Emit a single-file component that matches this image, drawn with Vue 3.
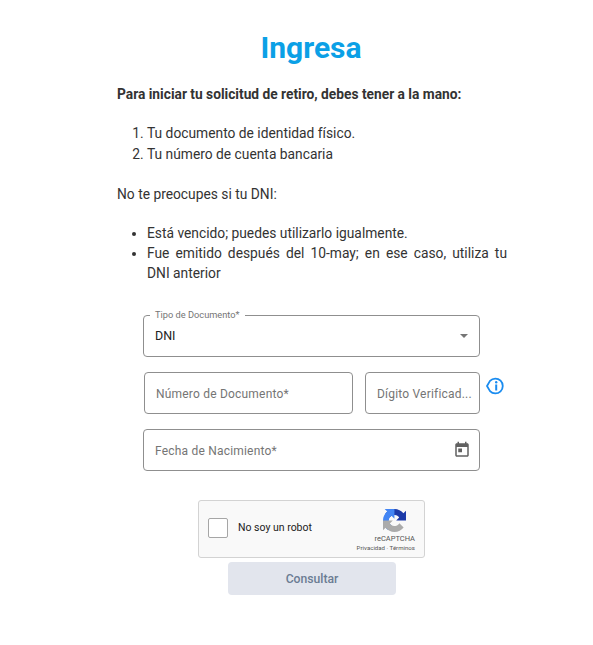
<script setup>
const needs = ['Tu documento de identidad físico.', 'Tu número de cuenta bancaria']
const notes = [
  'Está vencido; puedes utilizarlo igualmente.',
  'Fue emitido después del 10-may; en ese caso, utiliza tu DNI anterior',
]
</script>

<template>
  <main class="page">
    <h1 class="title">Ingresa</h1>
    <section class="intro">
      <p class="lead">Para iniciar tu solicitud de retiro, debes tener a la mano:</p>
      <ol class="list">
        <li v-for="item in needs" :key="item">{{ item }}</li>
      </ol>
      <p class="plain">No te preocupes si tu DNI:</p>
      <ul class="list bullets">
        <li v-for="item in notes" :key="item">{{ item }}</li>
      </ul>
    </section>

    <form class="form" @submit.prevent>
      <div class="field select">
        <span class="notch">Tipo de Documento*</span>
        <span class="value">DNI</span>
        <svg class="arrow" viewBox="0 0 10 5" width="8" height="4"><path d="M0 0h10L5 5z" fill="#757575" /></svg>
      </div>

      <div class="row">
        <div class="field number"><span class="hint">Número de Documento*</span></div>
        <div class="field digit"><span class="hint">Dígito Verificad...</span></div>
        <svg class="info" viewBox="0 0 20 20" width="20" height="20" fill="none">
          <path d="M4 4.900A7.400 7.400 0 1 1 4 15.100L1 10z" stroke="#1a8cf0" stroke-width="1.800" stroke-linejoin="round" />
          <circle cx="10.200" cy="6.300" r="1.200" fill="#1a8cf0" />
          <rect x="9.200" y="8.500" width="2" height="6" fill="#1a8cf0" />
        </svg>
      </div>

      <div class="field date">
        <span class="hint">Fecha de Nacimiento*</span>
        <svg class="calendar" viewBox="0 0 24 24" width="24" height="24">
          <path fill="#616161" d="M19 3h-1V1h-2v2H8V1H6v2H5c-1.110 0-1.990.9-1.990 2L3 19c0 1.100.89 2 2 2h14c1.100 0 2-.9 2-2V5c0-1.100-.9-2-2-2zm0 16H5V8h14v11zM7 10h5v5H7z" />
        </svg>
      </div>
    </form>

    <div class="captcha">
      <span class="box"></span>
      <span class="robot">No soy un robot</span>
      <div class="brand">
        <svg viewBox="0 0 64 64" width="23" height="23">
          <path fill="#1c3aa9" d="M64 31.955l-.033-1.370V4.687l-7.160 7.160C50.948 4.674 42.033.093 32.050.093c-10.400 0-19.622 4.960-25.458 12.640l11.736 11.860a15.550 15.550 0 0 1 4.754-5.334c2.050-1.600 4.952-2.906 8.968-2.906.485 0 .86.057 1.135.163 4.976.393 9.288 3.140 11.828 7.124l-8.307 8.307L64 31.953" />
          <path fill="#4285f4" d="M31.862 0l-1.370.033H4.594l7.160 7.160C4.580 13.050 0 21.967 0 31.950c0 10.400 4.960 19.622 12.640 25.458l11.860-11.736a15.550 15.550 0 0 1-5.334-4.754c-1.600-2.050-2.906-4.952-2.906-8.968 0-.485.057-.86.163-1.135.393-4.976 3.140-9.288 7.124-11.828l8.307 8.307L31.860 0" />
          <path fill="#ababab" d="M.001 32l.033 1.370v25.900l7.160-7.160c5.860 7.173 14.775 11.754 24.760 11.754 10.400 0 19.622-4.960 25.458-12.640L45.676 39.370a15.550 15.550 0 0 1-4.754 5.334c-2.050 1.600-4.952 2.906-8.968 2.906-.485 0-.86-.057-1.135-.163-4.976-.393-9.288-3.140-11.828-7.124l8.307-8.307L.001 32" />
        </svg>
        <span class="name">reCAPTCHA</span>
        <span class="terms">Privacidad · Términos</span>
      </div>
    </div>
    <button class="submit" type="button" disabled>Consultar</button>
  </main>
</template>

<style scoped>
.page {
  width: 390px;
  margin-left: 117px;
  font-family: Roboto, sans-serif;
  color: #333;
  font-size: 13.800px;
  line-height: 20px;
  display: flex;
  flex-direction: column;
  align-items: center;
  padding-top: 29px;
}
.title {
  margin: 0 2px 0 0;
  font-size: 30px;
  line-height: 38px;
  font-weight: 700;
  color: #0ba0e6;
}
.intro {
  width: 100%;
  margin-top: 17px;
}
.lead {
  margin: 0;
  font-weight: 700;
  font-size: 13.750px;
}
.plain {
  margin: 20px 0 18.500px;
}
.list {
  margin: 19px 0 0;
  padding-left: 30px;
  text-align: justify;
}
.list li + li {
  margin-top: 1px;
}
.bullets {
  margin-top: 0;
}
.bullets li + li {
  margin-top: 0;
}
.form {
  width: 337px;
  margin-top: 32.500px;
  margin-left: -1px;
  display: flex;
  flex-direction: column;
  gap: 15px;
  color: #757575;
  font-size: 12px;
}
.field {
  position: relative;
  height: 42px;
  box-sizing: border-box;
  border: 1px solid #8f8f8f;
  border-radius: 4px;
  display: flex;
  align-items: center;
  padding: 0 11px;
}
.notch {
  position: absolute;
  left: 6px;
  top: -7px;
  padding: 0 5px;
  background: #fff;
  font-size: 9.250px;
  line-height: 12px;
  color: #757575;
}
.value {
  color: #222;
  font-size: 12.500px;
}
.arrow {
  margin-left: auto;
}
.row {
  position: relative;
  display: flex;
  gap: 12px;
  padding-left: 1px;
}
.number {
  width: 209px;
}
.digit {
  width: 115px;
}
.hint {
  letter-spacing: 0.2px;
  white-space: nowrap;
  padding-top: 2px;
}
.info {
  position: absolute;
  left: 343px;
  top: 4px;
}
.date {
  justify-content: space-between;
}
.calendar {
  width: 18px;
  height: 18px;
  margin-right: -3px;
}
.captcha {
  width: 227px;
  height: 58px;
  box-sizing: border-box;
  margin-top: 29px;
  padding-bottom: 3px;
  background: #f9f9f9;
  border: 1px solid #d3d3d3;
  border-radius: 3px;
  display: flex;
  align-items: center;
  color: #222;
  align-self: flex-start;
  margin-inline-start: 81px;
}
.box {
  width: 20px;
  height: 20px;
  box-sizing: border-box;
  margin-left: 9px;
  background: #fff;
  border: 1px solid #a6a6a6;
  border-radius: 2px;
}
.robot {
  margin-left: 10px;
  font-size: 10.500px;
}
.brand {
  margin-left: auto;
  width: 72px;
  margin-right: 3px;
  display: flex;
  flex-direction: column;
  align-items: flex-end;
  align-self: flex-start;
  padding-top: 8px;
}
.brand svg {
  margin-right: 15px;
}
.name {
  font-size: 7.500px;
  line-height: 9px;
  color: #555;
  margin-right: 6px;
  margin-top: 2px;
}
.terms {
  font-size: 6.100px;
  line-height: 10px;
  color: #555;
  white-space: nowrap;
  margin-right: 6px;
}
.submit {
  width: 168px;
  height: 33px;
  margin-top: 4px;
  border: 0;
  border-radius: 4px;
  background: #e2e5ed;
  color: #6b7c93;
  font-family: inherit;
  font-size: 12.200px;
  font-weight: 500;
  align-self: flex-start;
  margin-inline-start: 111px;
}
</style>
